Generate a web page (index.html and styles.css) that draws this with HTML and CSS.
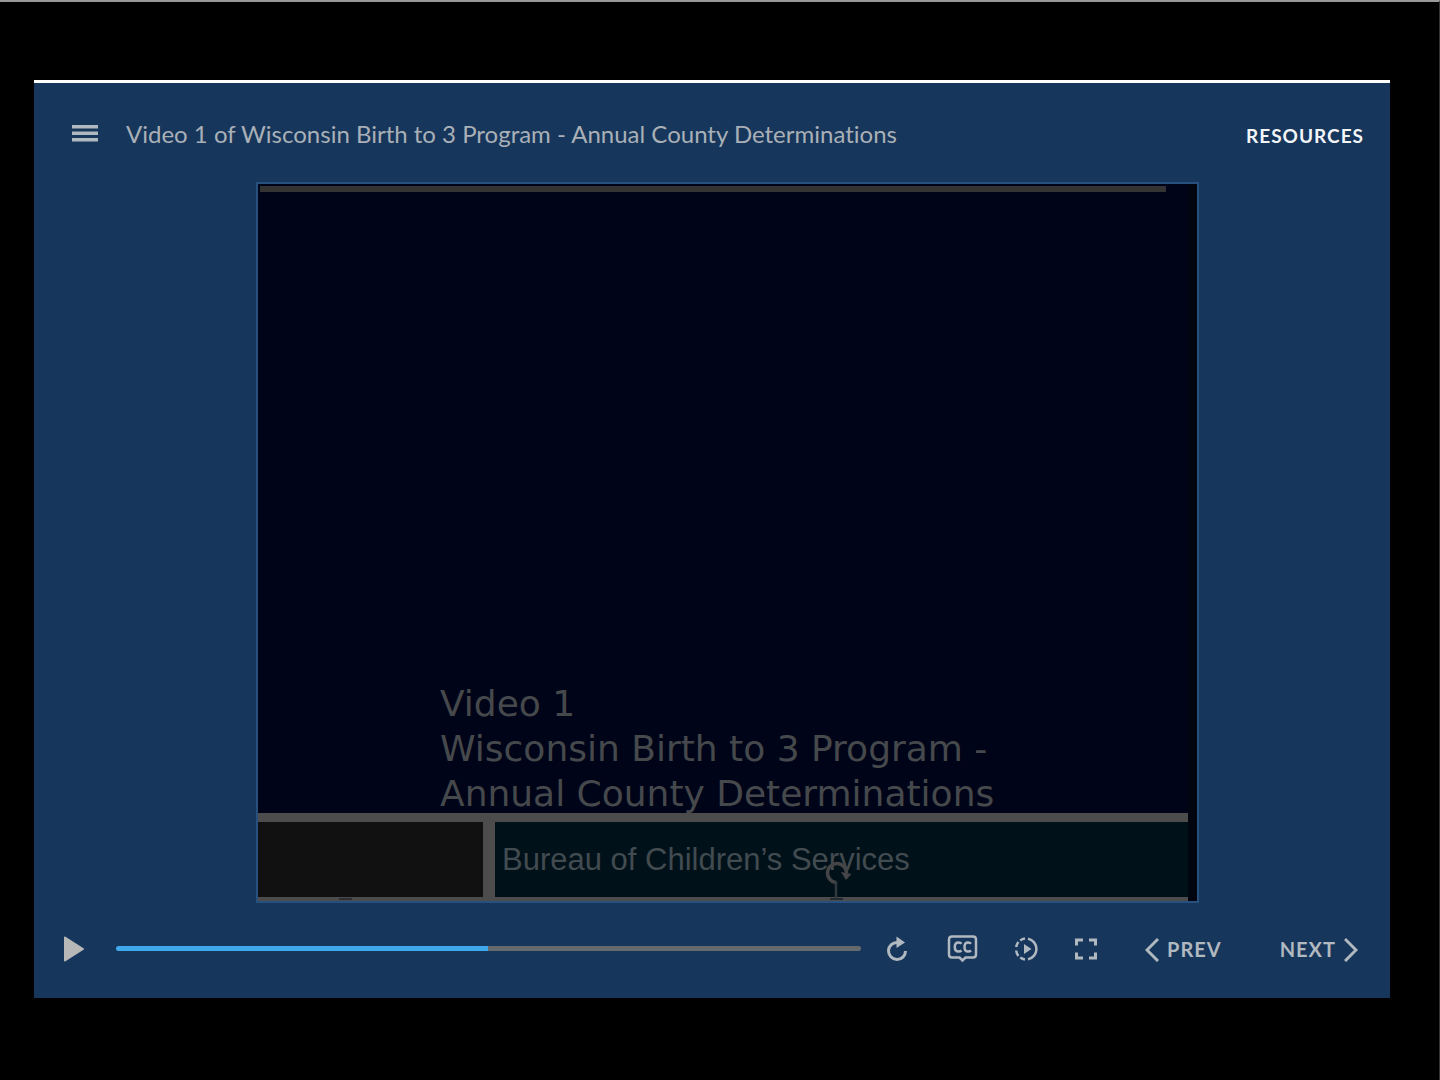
FILE: index.html
```html
<!DOCTYPE html>
<html lang="en">
<head>
<meta charset="utf-8">
<title>Wisconsin Birth to 3 Program</title>
<link rel="stylesheet" href="styles.css">
</head>
<body>
<main class="player">
  <header class="topbar">
    <button class="btn" aria-label="Menu">
      <svg width="26" height="18" viewBox="0 0 26 18" fill="currentColor"><path d="M0 0h26v3.500H0zM0 6.500h26v3.500H0zM0 13h26v3.500H0z"/></svg>
    </button>
    <h1 class="title">Video 1 of Wisconsin Birth to 3 Program - Annual County Determinations</h1>
    <button class="btn resources">RESOURCES</button>
  </header>

  <section class="slide">
    <div class="slide-rule"></div>
    <h2 class="slide-title">Video 1<br>Wisconsin Birth to 3 Program -<br>Annual County Determinations</h2>
    <div class="banner">
      <div class="banner-logo"></div>
      <div class="banner-name">Bureau of Children’s Services</div>
      <span class="banner-mark"></span>
      <svg class="rotate" width="28" height="40" viewBox="0 0 28 40" fill="none" stroke="#454547">
        <path d="M12 21.500A9.500 9.500 0 1 1 22.500 12" stroke-width="3.500"/>
        <path d="M17 11l10.500 2-5.500 6z" fill="#454547" stroke="none"/>
        <path d="M12 20v18" stroke-width="2.500" stroke="#30393d"/>
        <path d="M6 38h13" stroke-width="2" stroke="#222b31"/>
      </svg>
    </div>
  </section>

  <footer class="controls">
    <button class="btn" aria-label="Play">
      <svg width="20" height="26" viewBox="0 0 20 26" fill="#b8b8b8"><path d="M0 1.500Q0 0 1.500.7L19.500 12.300Q20.500 13 19.500 13.700L1.500 25.300Q0 26 0 24.500z"/></svg>
    </button>
    <input class="seek" type="range" min="0" max="100" value="50" aria-label="Progress">
    <div class="tools">
      <button class="btn" aria-label="Replay">
        <svg width="24" height="28" viewBox="0 0 24 28"><path d="M11.500 7.500A8.500 8.500 0 1 0 19.500 16" fill="none" stroke="currentColor" stroke-width="3"/><path d="M10.500 1.500l8.500 6-8.500 5.500z" fill="currentColor"/></svg>
      </button>
      <button class="btn" aria-label="Captions">
        <svg width="32" height="28" viewBox="0 0 32 28" fill="none" stroke="currentColor"><path d="M6 1.500h21q3 0 3 3v15q0 3-3 3h-7.500l-3 3-3-3H6q-3 0-3-3v-15q0-3 3-3z" stroke-width="2.500"/><path d="M15.500 8.700Q14.500 7.500 12.500 7.500 8.800 7.500 8.800 12T12.500 16.500Q14.500 16.500 15.500 15.500M25 8.700Q24 7.500 22 7.500 18.500 7.500 18.500 12T22 16.500Q24 16.500 25 15.500" stroke-width="2.500"/></svg>
      </button>
      <button class="btn" aria-label="Playback speed">
        <svg width="24" height="26" viewBox="0 0 24 26"><g fill="none" stroke="currentColor" stroke-width="2.500"><path d="M14 2.700A10.500 10.500 0 0 1 14 23.300"/><path d="M11 2.600A10.500 10.500 0 0 0 6.200 4.500M4.400 6A10.500 10.500 0 0 0 2.200 11M2.200 14.500A10.500 10.500 0 0 0 4.400 20M6.200 21.500A10.500 10.500 0 0 0 11 23.400"/></g><path d="M10 8l7.500 5-7.500 5z" fill="currentColor"/></svg>
      </button>
      <button class="btn" aria-label="Full screen">
        <svg width="24" height="24" viewBox="0 0 24 24" fill="none" stroke="currentColor" stroke-width="3"><path d="M2.500 8.500V3H9M15 3h6.500v5.500M21.500 15.500V21H15M9 21H2.500v-5.500"/></svg>
      </button>
    </div>
    <div class="nav">
      <button class="btn step"><svg width="14" height="26" viewBox="0 0 14 26" fill="none" stroke="currentColor" stroke-width="3"><path d="M13 3L2 14l11 11"/></svg>PREV</button>
      <button class="btn step">NEXT<svg width="14" height="26" viewBox="0 0 14 26" fill="none" stroke="currentColor" stroke-width="3"><path d="M1 3l11 11L1 25"/></svg></button>
    </div>
  </footer>
</main>
</body>
</html>
```
FILE: styles.css
```css
* { box-sizing: border-box; }

body {
  margin: 0;
  min-height: 100vh;
  padding: 78px 49px 82px 34px;
  background: #000;
  border-top: 2px solid #999;
  border-right: 1px solid #333;
  font-family: Lato, sans-serif;
  font-variant-ligatures: none;
}

.player {
  background: #17365b;
  border-top: 3px solid #fff;
}

.btn {
  display: flex;
  align-items: center;
  margin: 0;
  padding: 0;
  border: 0;
  background: none;
  color: #b0b8c0;
  font-family: inherit;
  cursor: pointer;
}

svg { display: block; }

.topbar {
  display: flex;
  align-items: center;
  gap: 28px;
  height: 99px;
  padding: 2px 26px 0 38px;
}

.title {
  flex: 1;
  margin: 0;
  color: #a9b0b7;
  font-size: 24px;
  font-weight: 400;
  line-height: 30px;
}

.resources {
  padding-top: 4px;
  color: #f1f5f8;
  font-size: 19px;
  font-weight: 700;
  letter-spacing: 1px;
}

.slide {
  display: flex;
  flex-direction: column;
  min-height: 721px;
  margin: 0 191px 0 222px;
  padding: 2px 9px 0 0;
  border: 2px solid #27507f;
  background: linear-gradient(to left, #00050f 9px, #000418 9px);
}

.slide-rule {
  height: 6px;
  margin: 0 22px 0 2px;
  background: #333;
}

.slide-title {
  margin: auto 0 -3px;
  padding: 0 0 0 182px;
  color: #46494c;
  font-family: "DejaVu Sans", sans-serif;
  font-size: 36px;
  font-weight: 400;
  line-height: 45px;
}

.banner {
  position: relative;
  display: flex;
  gap: 12px;
  padding: 9px 0 4px;
  background: #4c4c4c;
}

.banner-logo {
  flex: 0 0 225px;
  background: #111;
}

.banner-name {
  flex: 1;
  height: 75px;
  padding-left: 7px;
  background: #001119;
  color: #424b50;
  font-family: "Liberation Sans", sans-serif;
  font-size: 31px;
  line-height: 75px;
}

.banner-mark {
  position: absolute;
  bottom: 1px;
  left: 81px;
  width: 13px;
  height: 2px;
  background: #2b3135;
}

.rotate {
  position: absolute;
  bottom: 0;
  left: 566px;
}

.controls {
  display: flex;
  align-items: center;
  height: 95px;
  padding: 0 32px 4px 30px;
}

.seek {
  flex: 1;
  min-width: 0;
  height: 5px;
  margin: 0 25px 0 32px;
  border-radius: 3px;
  appearance: none;
  background: linear-gradient(to right, #40a9ed 50%, #656a6e 50%);
}

.seek::-webkit-slider-thumb {
  appearance: none;
  width: 1px;
  height: 5px;
}

.tools {
  display: flex;
  align-items: center;
  gap: 36px;
}

.nav {
  display: flex;
  gap: 58px;
  margin-left: 47px;
}

.step {
  gap: 8px;
  font-size: 20px;
  font-weight: 700;
  letter-spacing: 1px;
  line-height: 26px;
}
```
